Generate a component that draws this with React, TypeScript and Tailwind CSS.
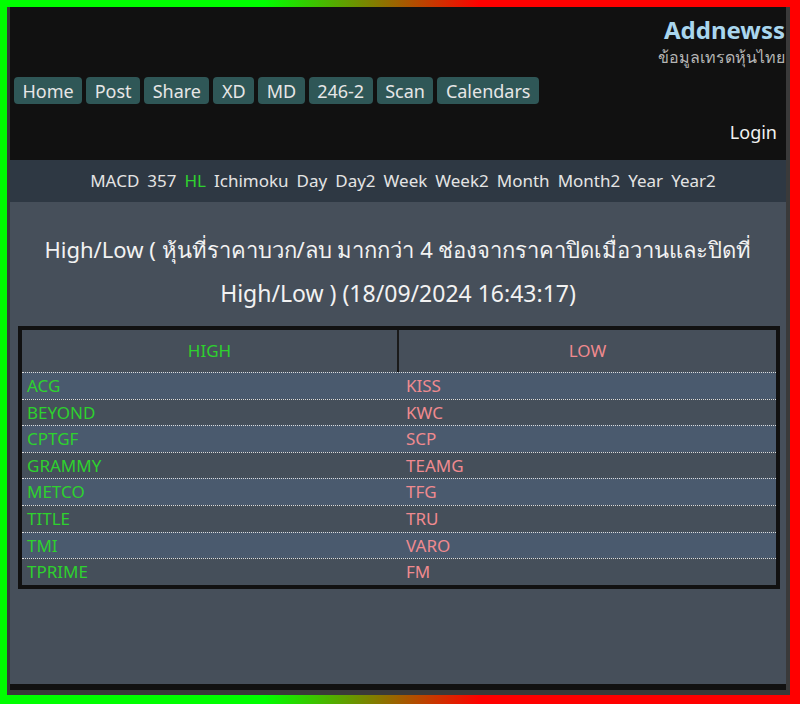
import React from "react";

const buttons = ["Home", "Post", "Share", "XD", "MD", "246-2", "Scan", "Calendars"];
const navLinks = ["MACD", "357", "HL", "Ichimoku", "Day", "Day2", "Week", "Week2", "Month", "Month2", "Year", "Year2"];
const highs = ["ACG", "BEYOND", "CPTGF", "GRAMMY", "METCO", "TITLE", "TMI", "TPRIME"];
const lows = ["KISS", "KWC", "SCP", "TEAMG", "TFG", "TRU", "VARO", "FM"];

export default function App() {
  return (
    <div
      className="h-[704px] w-[800px] pt-[7px] pl-[7px] pr-[10px] pb-[9px] bg-[linear-gradient(to_right,#00ff00_33%,#ff0000_60%)]"
      style={{ fontFamily: '"Noto Sans", "Open Sans", sans-serif' }}
    >
      <div className="flex h-full flex-col border-l-[3px] border-r-[4px] border-b-[5px] border-[#3a3a3a] bg-[#111111]">
        {/* Header */}
        <div className="h-[153px] bg-[#111111] pt-[7px]">
          <div className="flex flex-col items-end pr-[1px]">
            <div className="text-[24px] font-bold leading-[32px] text-[#a9d6ee]">Addnewss</div>
            <div className="text-[16px] leading-[22px] text-[#b5b5b5]">ข้อมูลเทรดหุ้นไทย</div>
          </div>
          <div className="mt-[9px] flex gap-[4px] pl-[4px]">
            {buttons.map((b) => (
              <div
                key={b}
                className="flex h-[27px] items-center rounded-[4px] bg-[#2f5757] px-[8.5px] text-[18px] leading-none text-[#e6e6e6]"
              >
                {b}
              </div>
            ))}
          </div>
          <div className="mt-[16px] flex justify-end pr-[9px] text-[18px] leading-[24px] text-[#f2f2f2]">Login</div>
        </div>

        {/* Sub nav */}
        <div className="flex h-[42px] items-center justify-center gap-[8px] bg-[#2e3843] pl-[10px] text-[17px] text-[#e4e4e4]">
          {navLinks.map((l) => (
            <span key={l} className={l === "HL" ? "text-[#2ed12e]" : ""}>
              {l}
            </span>
          ))}
        </div>

        {/* Main */}
        <div className="flex-1 bg-[#464f5a] pt-[25px]">
          <div className="text-center text-[22px] leading-[44px] text-[#f2f2f2]">
            <div>High/Low ( หุ้นที่ราคาบวก/ลบ มากกว่า 4 ช่องจากราคาปิดเมื่อวานและปิดที่</div>
            <div className="text-[23px]">High/Low ) (18/09/2024 16:43:17)</div>
          </div>

          <div className="ml-[8px] mt-[11px] w-[762px] border-[4px] border-[#111111] bg-[#464f5a]">
            <div className="flex h-[42px] text-[17px]">
              <div className="flex w-[377px] items-center justify-center border-r-[2px] border-[#1a1a1a] text-[#2ed12e]">
                HIGH
              </div>
              <div className="flex flex-1 items-center justify-center text-[#f08a8f]">LOW</div>
            </div>
            {highs.map((h, i) => (
              <div
                key={h}
                className={`flex h-[26.6px] items-center border-t border-dotted border-[#dcdcdc] text-[17px] ${
                  i % 2 === 0 ? "bg-[#4a5a6e]" : "bg-[#454f5a]"
                }`}
              >
                <div className="w-[379px] pl-[5px] text-[#2ed12e]">{h}</div>
                <div className="flex-1 pl-[5px] text-[#f08a8f]">{lows[i]}</div>
              </div>
            ))}
          </div>
        </div>

        <div className="h-[6px] bg-[#111111]" />
      </div>
    </div>
  );
}
